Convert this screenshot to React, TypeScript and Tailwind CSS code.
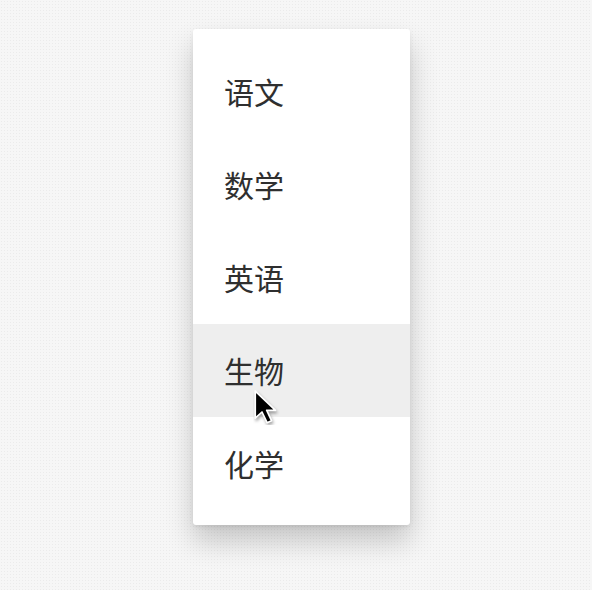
const subjects = ['语文', '数学', '英语', '生物', '化学'];

function Cursor() {
  return (
    <svg
      className="absolute left-[253px] top-[390px]"
      width="27"
      height="35"
      viewBox="0 0 24 31"
    >
      <path
        d="M2 1 L2 25 L8 19.5 L12.5 29 L16.5 27.2 L12.2 18 L20 18 Z"
        fill="#000"
        stroke="#fff"
        strokeWidth="1.5"
        strokeLinejoin="round"
        style={{ filter: 'drop-shadow(1px 2px 1.5px rgba(0,0,0,0.35))' }}
      />
    </svg>
  );
}

export default function App() {
  return (
    <div className="relative w-[592px] h-[590px] bg-[#f6f6f6] bg-[radial-gradient(#ebebeb_0.6px,transparent_0.8px)] bg-[length:3px_3px] pl-[193px] pt-[29px]">
      <div className="w-[217px] bg-white rounded-[3px] py-[15.5px] shadow-[0_16px_28px_rgba(0,0,0,0.2),0_2px_4px_rgba(0,0,0,0.08)]">
        {subjects.map((s, i) => (
          <div
            key={s}
            className={`h-[93px] flex items-center pl-[31px] text-[30px] text-[#2f2f2f] ${
              i === 3 ? 'bg-[#eeeeee]' : ''
            }`}
            style={{ fontFamily: '"Noto Sans CJK SC", "Noto Sans", sans-serif' }}
          >
            {s}
          </div>
        ))}
      </div>
      <Cursor />
    </div>
  );
}
